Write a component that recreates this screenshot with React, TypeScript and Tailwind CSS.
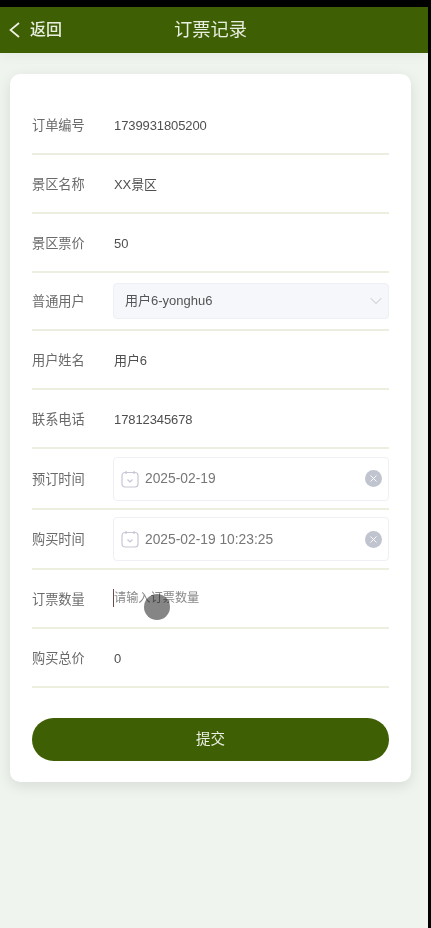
import React from 'react';
import { ChevronDown, X } from 'lucide-react';

const font = "font-['Liberation_Sans','Noto_Sans_CJK_SC',sans-serif]";

const Row = ({ label, className = '', children }: { label: string; className?: string; children: React.ReactNode }) => (
  <div className={`flex items-center border-b-2 border-[#ecefe0] ${className}`}>
    <div className="w-[81px] shrink-0 pt-[2px] text-[13.2px] text-[#6a6a6a]">{label}</div>
    <div className="min-w-0 flex-1 text-[13px] text-[#4f4f4f]">{children}</div>
  </div>
);

const Plain = ({ children }: { children: React.ReactNode }) => (
  <div className="pl-px pt-[2px] tracking-[-0.1px]">{children}</div>
);

const DateBox = ({ value }: { value: string }) => (
  <div className="flex h-[44px] items-center rounded border border-[#eef0f5] bg-white pl-[7px] pr-[6px]">
    <svg width="18" height="18" viewBox="0 0 18 18" fill="none" stroke="#c4c8d4" strokeWidth="1.2" className="shrink-0">
      <rect x="1" y="2.5" width="16" height="14.5" rx="3" />
      <path d="M5 1v3M13 1v3M6.5 9.5l2.5 2.5 2.5-2.5" />
    </svg>
    <span className="ml-[6px] flex-1 pt-[2px] text-[13.8px] text-[#777777]">{value}</span>
    <span className="flex h-[17px] w-[17px] items-center justify-center rounded-full bg-[#bfc4ce]">
      <X size={11} color="#ffffff" strokeWidth={2} />
    </span>
  </div>
);

export default function App() {
  return (
    <div className={`${font} flex h-[928px] w-[431px] overflow-hidden bg-black`}>
      <div className="w-[428px] shrink-0">
        <div className="h-[7px] bg-black" />
        <div className="min-h-[921px] bg-[#eff5ee]">
          <header className="relative flex h-[46px] items-center bg-[#3f5f04] shadow-[0_2px_12px_rgba(0,0,0,0.05)]">
            <svg width="11" height="16" viewBox="0 0 11 16" fill="none" stroke="#eef2e6" strokeWidth="1.7" className="ml-[9px]">
              <path d="M10 1 1.5 8l8.5 7" />
            </svg>
            <span className="ml-[10px] text-[16px] font-medium text-[#e8eee0]">返回</span>
            <h1 className="absolute left-[174px] text-[18.3px] font-normal text-[#e8eee0]">订票记录</h1>
          </header>

          <main className="ml-[10px] mr-[17px] mt-[21px] h-[708px] rounded-[10px] bg-white px-[22px] pt-[22px] shadow-[0_4px_14px_rgba(0,0,0,0.1)]">
            <Row label="订单编号" className="h-[59px]"><Plain>1739931805200</Plain></Row>
            <Row label="景区名称" className="h-[59px]"><Plain>XX景区</Plain></Row>
            <Row label="景区票价" className="h-[59px]"><Plain>50</Plain></Row>
            <Row label="普通用户" className="h-[58px]">
              <div className="flex h-[36px] items-center justify-between rounded border border-[#eef0f5] bg-[#f5f7fa] pl-[11px] pr-[2px] text-[#555555]">
                <span>用户6-yonghu6</span>
                <ChevronDown size={20} strokeWidth={1} color="#b4b8c2" />
              </div>
            </Row>
            <Row label="用户姓名" className="h-[59px]"><Plain>用户6</Plain></Row>
            <Row label="联系电话" className="h-[59px]"><Plain>17812345678</Plain></Row>
            <Row label="预订时间" className="h-[61px]"><DateBox value="2025-02-19" /></Row>
            <Row label="购买时间" className="h-[60px]"><DateBox value="2025-02-19 10:23:25" /></Row>
            <Row label="订票数量" className="h-[59px]">
              <div className="relative flex items-center">
                <span className="h-[18px] w-px bg-[#6b4a4a]" />
                <span className="text-[12.2px] text-[#8a8a8a]">请输入订票数量</span>
                <span className="absolute left-[31px] top-[5px] h-[26px] w-[26px] rounded-full bg-[#858585] mix-blend-multiply" />
              </div>
            </Row>
            <Row label="购买总价" className="h-[59px]"><Plain>0</Plain></Row>
            <button className="mt-[30px] flex h-[43px] w-full items-center justify-center rounded-full bg-[#3f5f04] text-[14.5px] text-[#eef2e6]">
              提交
            </button>
          </main>
        </div>
      </div>
    </div>
  );
}
